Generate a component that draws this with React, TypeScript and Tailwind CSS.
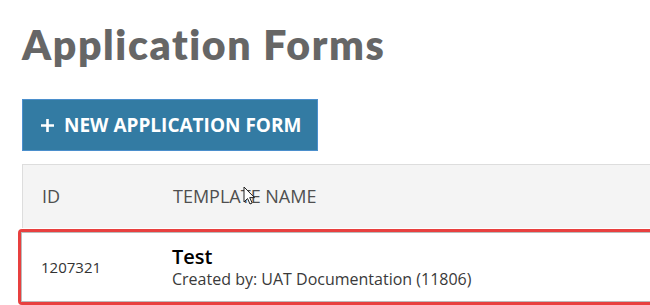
export default function App() {
  return (
    <div className="relative w-[650px] h-[305px] overflow-hidden bg-white pl-[22px] font-['Open_Sans',sans-serif]">
      <h1 className="mt-[24px] font-['Lato',sans-serif] text-[41px] font-extrabold leading-none tracking-[1.6px] text-[#666666]">
        Application Forms
      </h1>

      <button className="mt-[34px] flex h-[52px] w-[296px] items-center gap-[9px] border border-[#4b8fcc] bg-[#337ba3] pl-[17px] text-[19px] font-bold uppercase text-white">
        <svg width="15" height="15" viewBox="0 0 15 15" className="shrink-0">
          <path d="M7.5 1v13M1 7.5h13" stroke="white" strokeWidth="2.6" />
        </svg>
        New Application Form
      </button>

      <div className="mt-[13px] w-[700px]">
        <div className="flex h-[64px] items-center border-l border-t border-[#dddddd] bg-[#f4f4f4] text-[18px] text-[#4f4f4f]">
          <div className="w-[150px] pl-[19px]">ID</div>
          <div>TEMPLATE NAME</div>
        </div>

        <div className="-ml-[4px] mt-[1px] rounded-[4px] border-[3px] border-[#e8403f]">
          <div className="flex h-[70px] items-center border border-[#bbbbbb]">
            <div className="w-[150px] pl-[19px] text-[15px] text-[#333333]">1207321</div>
            <div className="flex flex-col">
              <span className="text-[20px] font-semibold leading-[24px] text-black">Test</span>
              <span className="text-[16px] leading-[20px] text-[#3a3a3a]">
                Created by: UAT Documentation (11806)
              </span>
            </div>
          </div>
        </div>
      </div>

      <svg
        className="absolute left-[243px] top-[186px]"
        width="12"
        height="19"
        viewBox="0 0 12 19"
      >
        <path
          d="M1 1v15l3.5-3.5 2.5 5.5 2.2-1-2.5-5.4H11.5Z"
          fill="white"
          stroke="#222"
          strokeWidth="1"
          strokeLinejoin="round"
        />
      </svg>
    </div>
  );
}
